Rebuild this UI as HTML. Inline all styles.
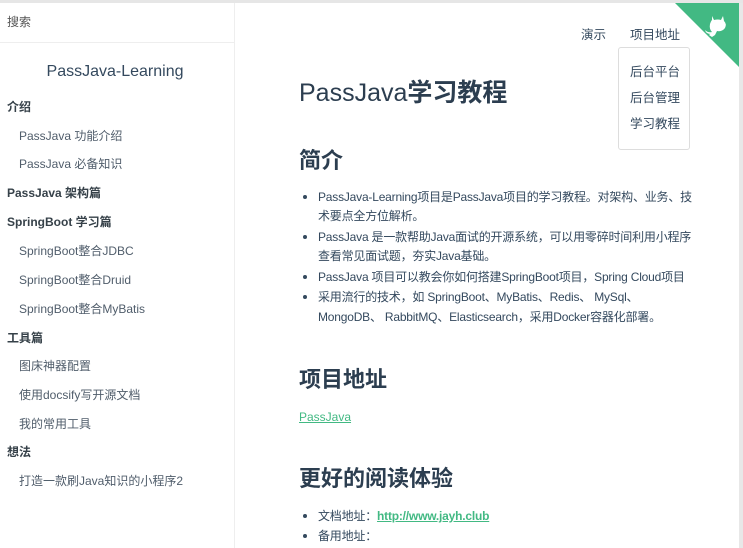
<!DOCTYPE html>
<html><head><meta charset="utf-8"><style>
*{margin:0;padding:0;box-sizing:border-box}
body{width:743px;height:548px;overflow:hidden;background:#fff;position:relative;font-family:"Liberation Sans","Noto Sans CJK SC",sans-serif;color:#34495e;font-size:13px}
.a{position:absolute;white-space:nowrap;line-height:1}
.topbar{position:absolute;left:0;top:0;width:743px;height:3px;background:#e6e6e6}
.side{position:absolute;left:0;top:3px;width:235px;height:545px;border-right:1px solid #eee;background:#fff}
.sb{position:absolute;left:0;top:39px;width:234px;height:1px;background:#eee}
.s{left:19px;color:#505d6b;font-size:12px}
.b{left:7px;font-weight:bold;color:#364149;font-size:12px}
.li{color:#34495e;font-size:12px;left:318px;letter-spacing:-0.2px}
.dot{position:absolute;left:303px;width:4px;height:4px;border-radius:50%;background:#34495e}
h1,h2{position:absolute;font-weight:bold;white-space:nowrap;line-height:1;color:#2c3e50}
a{color:#42b983;font-weight:bold;text-decoration:underline}
.scroll{position:absolute;left:739px;top:3px;width:4px;height:545px;background:#e8e8e8}
</style></head><body>
<div class="topbar"></div>
<div class="side">
<div class="a" style="left:7px;top:13px;font-size:12px;color:#555">搜索</div>
<div class="sb"></div>
<div class="a" style="left:0;width:230px;text-align:center;top:61px;font-size:16px;color:#34495e">PassJava-Learning</div>
</div>
<div class="a b" style="top:101px">介绍</div>
<div class="a s" style="top:130px">PassJava 功能介绍</div>
<div class="a s" style="top:158px">PassJava 必备知识</div>
<div class="a b" style="top:187px">PassJava 架构篇</div>
<div class="a b" style="top:216px">SpringBoot 学习篇</div>
<div class="a s" style="top:245px">SpringBoot整合JDBC</div>
<div class="a s" style="top:274px">SpringBoot整合Druid</div>
<div class="a s" style="top:303px">SpringBoot整合MyBatis</div>
<div class="a b" style="top:332px">工具篇</div>
<div class="a s" style="top:360px">图床神器配置</div>
<div class="a s" style="top:389px">使用docsify写开源文档</div>
<div class="a s" style="top:418px">我的常用工具</div>
<div class="a b" style="top:446px">想法</div>
<div class="a s" style="top:475px">打造一款刷Java知识的小程序2</div>

<div class="a" style="left:581px;top:29px;font-size:12.5px">演示</div>
<div class="a" style="left:630px;top:29px;font-size:12.5px">项目地址</div>
<div style="position:absolute;left:618px;top:47px;width:72px;height:103px;border:1px solid #ddd;border-radius:3px;background:#fff"></div>
<div class="a" style="left:630px;top:66px;font-size:12.5px">后台平台</div>
<div class="a" style="left:630px;top:92px;font-size:12.5px">后台管理</div>
<div class="a" style="left:630px;top:118px;font-size:12.5px">学习教程</div>

<div style="position:absolute;left:675px;top:3px;width:65px;height:65px;background:#42b983;clip-path:polygon(0 0,100% 0,100% 100%)"></div>
<svg style="position:absolute;left:700px;top:10px" width="30" height="30" viewBox="0 0 30 30"><path fill="#fff" d="M12 6 L14 10 Q18 9 21 10 L23 6 L24 11 Q27 14 25 18 Q22 22 17 21 L15 25 L12 27 L9 25 L12 22 Q9 19 10 14 Q11 11 12 10 Z M5 20 Q8 23 12 22 L11 24 Q6 24 5 20Z"/></svg>

<h1 style="left:299px;top:81px;font-size:25px"><span style="font-weight:normal">PassJava</span>学习教程</h1>
<h2 style="left:299px;top:150px;font-size:22px">简介</h2>
<div class="dot" style="top:195px"></div><div class="a li" style="top:191px">PassJava-Learning项目是PassJava项目的学习教程。对架构、业务、技</div>
<div class="a li" style="top:210px">术要点全方位解析。</div>
<div class="dot" style="top:235px"></div><div class="a li" style="top:231px">PassJava 是一款帮助Java面试的开源系统，可以用零碎时间利用小程序</div>
<div class="a li" style="top:250px">查看常见面试题，夯实Java基础。</div>
<div class="dot" style="top:275px"></div><div class="a li" style="top:271px">PassJava 项目可以教会你如何搭建SpringBoot项目，Spring Cloud项目</div>
<div class="dot" style="top:295px"></div><div class="a li" style="top:291px">采用流行的技术，如 SpringBoot、MyBatis、Redis、 MySql、</div>
<div class="a li" style="top:311px">MongoDB、 RabbitMQ、Elasticsearch，采用Docker容器化部署。</div>
<h2 style="left:299px;top:369px;font-size:22px">项目地址</h2>
<div class="a" style="left:299px;top:411px;font-size:12px"><a style="font-weight:normal">PassJava</a></div>
<h2 style="left:299px;top:468px;font-size:22px">更好的阅读体验</h2>
<div class="dot" style="top:514px"></div><div class="a li" style="top:510px">文档地址：<a>http://www.jayh.club</a></div>
<div class="dot" style="top:534px"></div><div class="a li" style="top:530px">备用地址：</div>
<div class="scroll"></div>
</body></html>
